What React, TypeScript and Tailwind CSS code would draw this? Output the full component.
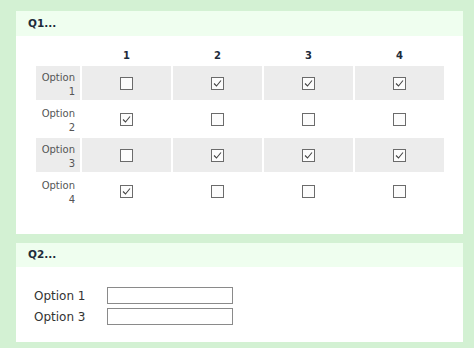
import React from 'react';

const cols = ['1', '2', '3', '4'];
const rows = [
  { label: '1', checks: [false, true, true, true] },
  { label: '2', checks: [true, false, false, false] },
  { label: '3', checks: [false, true, true, true] },
  { label: '4', checks: [true, false, false, false] },
];

function Box({ checked }: { checked: boolean }) {
  return (
    <svg width="13" height="13" viewBox="0 0 13 13">
      <rect x="0.5" y="0.5" width="12" height="12" fill="#fcfcfc" stroke="#6b6b6b" />
      {checked && <path d="M3 6.5 L5.5 9 L10 3.5" fill="none" stroke="#444" strokeWidth="1.1" />}
    </svg>
  );
}

export default function App() {
  return (
    <div
      className="w-[474px] h-[348px] bg-[#d3f1d3] pl-4 pr-[11px] pt-[11px] flex flex-col gap-[9px]"
      style={{ fontFamily: '"DejaVu Sans", Verdana, sans-serif' }}
    >
      {/* Q1 matrix */}
      <div className="h-[223px] bg-white flex flex-col">
        <div className="h-[25px] bg-[#effeef] flex items-center pl-3 text-[10.5px] font-bold text-[#1d2b3a]">Q1...</div>
        <div className="pl-5 pt-[10px]">
          <div className="grid grid-cols-[44px_repeat(4,1fr)] gap-[2px] w-[408px]">
            <div className="h-[18px]" />
            {cols.map((c) => (
              <div key={c} className="h-[18px] flex items-center justify-center text-[10px] font-bold text-[#1d2b3a]">
                {c}
              </div>
            ))}
            {rows.map((r, i) => (
              <React.Fragment key={r.label}>
                <div
                  className={`h-[34px] flex flex-col justify-center items-end pr-[5px] pt-[3px] text-[10px] leading-[14px] text-[#555] ${i % 2 === 0 ? 'bg-[#ececec]' : ''}`}
                >
                  <span>Option</span>
                  <span>{r.label}</span>
                </div>
                {r.checks.map((c, j) => (
                  <div
                    key={j}
                    className={`h-[34px] flex items-center justify-center ${i % 2 === 0 ? 'bg-[#ececec]' : ''}`}
                  >
                    <Box checked={c} />
                  </div>
                ))}
              </React.Fragment>
            ))}
          </div>
        </div>
      </div>

      {/* Q2 text inputs */}
      <div className="h-[99px] bg-white flex flex-col">
        <div className="h-[24px] bg-[#effeef] flex items-center pl-3 text-[10.5px] font-bold text-[#1d2b3a]">Q2...</div>
        <div className="pl-[18px] pt-5 flex flex-col gap-1">
          {['Option 1', 'Option 3'].map((l) => (
            <div key={l} className="flex items-center h-[17px]">
              <span className="w-[73px] text-[12px] leading-[17px] pt-[2px] text-[#333]">{l}</span>
              <div className="w-[126px] h-[17px] border border-[#8a8a8a] bg-white" />
            </div>
          ))}
        </div>
      </div>
    </div>
  );
}
